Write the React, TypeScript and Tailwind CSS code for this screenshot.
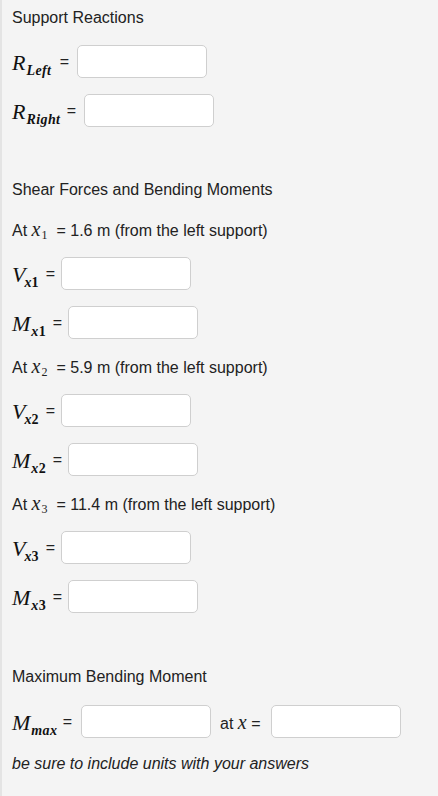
import React from "react";

const sans = { fontFamily: '"Liberation Sans", Arial, sans-serif' };
const serif = { fontFamily: '"Liberation Serif", "Times New Roman", serif' };

function Box({ w = "w-[130px]" }: { w?: string }) {
  return (
    <div className={`${w} h-[33px] bg-white border border-[#cfcfcf] rounded-[5px] shrink-0`} />
  );
}

function Main({ children }: { children: React.ReactNode }) {
  return (
    <span className="italic text-[22px] leading-none text-[#111]" style={serif}>
      {children}
    </span>
  );
}

function Sub({ children, tight }: { children: React.ReactNode; tight?: boolean }) {
  return (
    <span
      className={`text-[14px] leading-none relative top-[5px] text-[#111] ${tight ? "-ml-[1px] tracking-[0px]" : "ml-[1px] tracking-[0.4px]"}`}
      style={serif}
    >
      {children}
    </span>
  );
}

function Row({
  main,
  sub,
  mt,
  labelW,
  eq,
  tight,
}: {
  main: string;
  sub: React.ReactNode;
  mt: string;
  labelW: string;
  eq: string;
  tight?: boolean;
}) {
  return (
    <div className={`flex items-center ${mt}`}>
      <div className={`${labelW} shrink-0 flex items-center`}>
        <span className="flex items-baseline pt-[2px] whitespace-nowrap">
          <Main>{main}</Main>
          <Sub tight={tight}>{sub}</Sub>
        </span>
        <span className={`ml-auto ${eq} text-[16px] text-[#222]`}>=</span>
      </div>
      <Box />
    </div>
  );
}

function XSub({ n }: { n: string }) {
  return (
    <>
      <i className="font-bold">x</i>
      <span className="font-bold not-italic">{n}</span>
    </>
  );
}

function AtLine({ n, v, mt }: { n: string; v: string; mt: string }) {
  return (
    <div className={`${mt} h-[20px] leading-[20px] text-[16px] text-[#222] flex items-baseline`}>
      <span>At&nbsp;</span>
      <span className="italic text-[20px]" style={serif}>x</span>
      <span className="text-[12px] relative top-[3px] ml-[1px]" style={serif}>{n}</span>
      <span className="ml-[9px]">= {v} m (from the left support)</span>
    </div>
  );
}

export default function App() {
  return (
    <div className="min-h-[796px] w-[438px] bg-[#f4f4f4] border-l-2 border-[#e4e4e4] pl-[10px] pt-[8px] text-[#222]" style={sans}>
      <div className="h-[20px] leading-[20px] text-[16px]">Support Reactions</div>
      <Row main="R" sub={<i className="font-bold">Left</i>} mt="mt-[17px]" labelW="w-[65px]" eq="mr-[8px]" />
      <Row main="R" sub={<i className="font-bold">Right</i>} mt="mt-[16px]" labelW="w-[72px]" eq="mr-[8px]" />

      <div className="mt-[53px] h-[20px] leading-[20px] text-[16px]">Shear Forces and Bending Moments</div>

      <AtLine n="1" v="1.6" mt="mt-[19px]" />
      <Row main="V" sub={<XSub n="1" />} mt="mt-[18px]" labelW="w-[49px]" eq="mr-[6px]" tight />
      <Row main="M" sub={<XSub n="1" />} mt="mt-[16px]" labelW="w-[56px]" eq="mr-[6px]" />

      <AtLine n="2" v="5.9" mt="mt-[17px]" />
      <Row main="V" sub={<XSub n="2" />} mt="mt-[18px]" labelW="w-[49px]" eq="mr-[6px]" tight />
      <Row main="M" sub={<XSub n="2" />} mt="mt-[16px]" labelW="w-[56px]" eq="mr-[6px]" />

      <AtLine n="3" v="11.4" mt="mt-[17px]" />
      <Row main="V" sub={<XSub n="3" />} mt="mt-[18px]" labelW="w-[49px]" eq="mr-[6px]" tight />
      <Row main="M" sub={<XSub n="3" />} mt="mt-[16px]" labelW="w-[56px]" eq="mr-[6px]" />

      <div className="mt-[54px] h-[20px] leading-[20px] text-[16px]">Maximum Bending Moment</div>
      <div className="flex items-center mt-[18px]">
        <div className="w-[69px] shrink-0 flex items-center">
          <span className="flex items-baseline pt-[2px]">
            <Main>M</Main>
            <Sub><i className="font-bold">max</i></Sub>
          </span>
          <span className="ml-auto mr-[9px] text-[16px] text-[#222]">=</span>
        </div>
        <Box w="w-[130px]" />
        <div className="ml-[9px] w-[51px] flex items-baseline text-[16px]">
          <span>at&nbsp;</span>
          <span className="italic text-[20px]" style={serif}>x</span>
          <span>&nbsp;=</span>
        </div>
        <Box w="w-[130px]" />
      </div>
      <div className="mt-[16px] h-[20px] leading-[20px] text-[16px] italic">be sure to include units with your answers</div>
    </div>
  );
}
